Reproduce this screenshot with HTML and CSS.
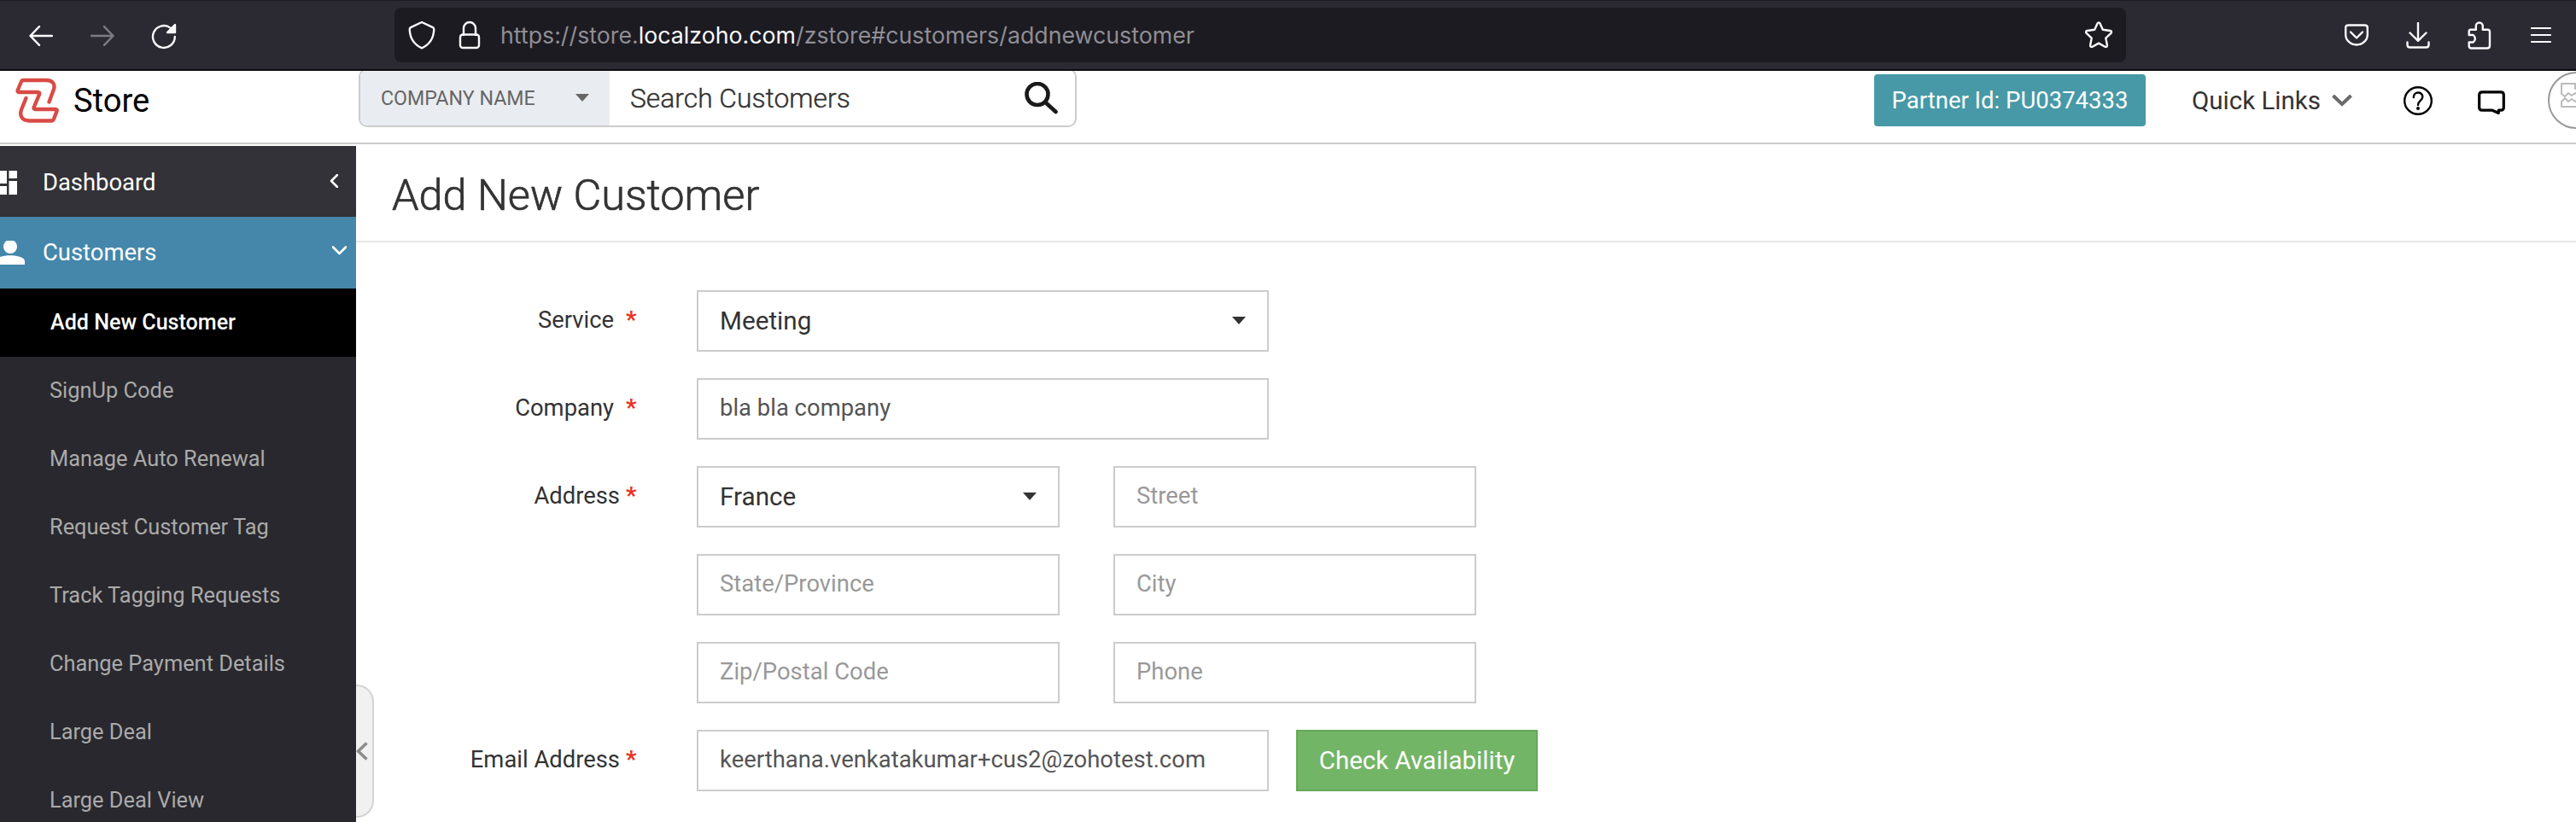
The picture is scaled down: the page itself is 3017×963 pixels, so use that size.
FILE: index.html
```
<!DOCTYPE html>
<html lang="en">
<head>
    <meta charset="UTF-8">
    <meta name="viewport" content="width=device-width, initial-scale=1.0">
    <title>Store - Add New Customer</title>
    <link rel="stylesheet" href="styles.css">
</head>
<body>
    <div class="browser-bar">
        <div class="nav-buttons">
            <svg width="28" height="24" viewBox="0 0 28 24"><path d="M12 1.2L1.5 12L12 22.8M1.5 12H27"/></svg>
            <svg class="disabled" width="28" height="24" viewBox="0 0 28 24"><path d="M16 1.2L26.5 12L16 22.8M26.5 12H1"/></svg>
            <svg class="reload" width="30" height="30" viewBox="0 0 30 30"><path d="M27.8 15A12.9 12.9 0 1 1 22.5 4.6L25 7"/><path class="solid" d="M28 1V10H19Z"/></svg>
        </div>
        <div class="url-bar">
            <svg class="shield" width="32" height="34" viewBox="0 0 32 34"><path d="M16 2L29 8.2C30.4 8.8 30.3 10 30.2 11.5C29.6 21 24.5 28.4 16 32.3C7.500 28.4 2.400 21 1.800 11.500C1.700 10 1.600 8.800 3 8.200Z"/></svg>
            <svg class="lock" width="26" height="34" viewBox="0 0 26 34"><path d="M6 17V9A7 7 0 0 1 20 9V17"/><rect x="2" y="16.500" width="22" height="15.500" rx="3"/></svg>
            <div class="url">https://store.<span>localzoho.com</span>/zstore#customers/addnewcustomer</div>
            <svg class="star" width="34" height="34" viewBox="0 0 34 34"><path d="M15.500 3.500C16.200 2 17.800 2 18.500 3.500L21.800 10.800L30.500 12C32 12.200 32.500 13.800 31.400 14.900L25.300 20.600L26.900 29C27.200 30.700 25.700 31.600 24.300 30.800L17 26.600L9.700 30.800C8.300 31.600 6.800 30.700 7.100 29L8.700 20.600L2.600 14.900C1.500 13.800 2 12.200 3.500 12L12.200 10.800Z"/></svg>
        </div>
        <div class="tools">
            <svg width="28" height="26" viewBox="0 0 28 26"><path d="M4.500 1.500H23.500Q26.800 1.500 26.800 4.500V12.500A12.800 12 0 0 1 1.200 12.500V4.500Q1.200 1.500 4.500 1.500Z"/><path d="M7 9.500L14 16.500L21 9.500"/></svg>
            <svg width="28" height="31" viewBox="0 0 28 31"><path d="M14 1V21.500M4.500 12.500L14 21.800L23.500 12.500M1.500 23.500V26.500Q1.500 29.500 4.500 29.500H23.500Q26.500 29.500 26.500 26.500V23.500"/></svg>
            <svg class="puzzle" width="28" height="33" viewBox="0 0 28 33"><path d="M3.500 9.800H9.800V5.500A4 4 0 0 1 17.800 5.500V9.800H23.500Q26 9.800 26 12.300V28.500Q26 31.500 23 31.500H4.500Q1.700 31.500 1.700 28.700V24.500H6.500A5 5 0 0 0 6.500 16H1.700V12Q1.700 9.800 3.500 9.800Z"/></svg>
            <svg class="burger" width="26" height="20" viewBox="0 0 26 20"><path d="M2 2H24M2 10H24M2 18H24"/></svg>
        </div>
    </div>

    <div class="header">
        <div class="logo">
            <svg width="52" height="53" viewBox="0 0 52 53"><path d="M39.500 28.500L45 13.500C47 7 43 3 36.500 3H9.500Q7.500 3 6.800 5L2.800 14.500Q1.900 17 4.500 17H26Q29 17 28 19.700L21.800 34.500Q20.800 37 23.500 37H47Q49.300 37 48.500 39.200L45 48.500Q44.200 50.500 42 50.500H16.500C8 50.500 4.500 45 7 37.500L12.500 24"/></svg>
            <span>Store</span>
        </div>
        <div class="search">
            <div class="search-type">COMPANY NAME <i class="arrow"></i></div>
            <div class="search-text">Search Customers</div>
            <svg width="40" height="38" viewBox="0 0 40 38"><circle cx="15" cy="14.500" r="12.500"/><path d="M24.500 24L36.500 35"/></svg>
        </div>
        <div class="header-right">
            <div class="partner">Partner Id: PU0374333</div>
            <div class="quick">Quick Links
                <svg width="24" height="15" viewBox="0 0 24 15"><path d="M1.500 2L12 12L22.500 2"/></svg>
            </div>
            <svg class="help" width="34" height="34" viewBox="0 0 34 34"><circle cx="17" cy="17" r="15.800"/><path d="M11.800 13C11.800 5.800 22.300 5.800 22.300 12.500C22.300 17 17 17 17 22"/><circle class="dot" cx="17" cy="26" r="2"/></svg>
            <svg class="chat" width="32" height="29" viewBox="0 0 32 29"><path d="M5 1.800H27Q30.300 1.800 30.300 5V20Q30.300 23.200 27 23.200H24.300V26.500L17 23.200H5Q1.700 23.200 1.700 20V5Q1.700 1.800 5 1.800Z"/></svg>
            <div class="avatar">
                <svg width="32" height="32" viewBox="0 0 32 32"><path d="M2 14V2H18V8H28M2 14L6 17L10 13L14 16L18 13L22 16L26 13M18 2L28 8M2 29H30M2 29V23L6 19L10 23L14 20L18 23L22 20L26 23"/></svg>
            </div>
        </div>
    </div>

    <div class="page">
        <div class="sidebar">
            <div class="menu dashboard">
                <svg class="menu-icon" width="20" height="28" viewBox="0 0 20 28"><path d="M0 0H8V15H0ZM0 18H8V28H0ZM10.500 0H20V9H10.500ZM10.500 12H20V28H10.500Z"/></svg>
                <span>Dashboard</span>
                <svg class="chev" width="10" height="16" viewBox="0 0 10 16"><path d="M9 1L2 8L9 15"/></svg>
            </div>
            <div class="menu active">
                <svg class="menu-icon" width="29" height="28" viewBox="0 0 29 28"><circle cx="12" cy="7" r="8"/><path d="M-5 28V24C-5 15 29 15 29 24V28Z"/></svg>
                <span>Customers</span>
                <svg class="chev down" width="17" height="11" viewBox="0 0 17 11"><path d="M1 1.500L8.500 9L16 1.500"/></svg>
            </div>
            <div class="sub current">Add New Customer</div>
            <div class="sub">SignUp Code</div>
            <div class="sub">Manage Auto Renewal</div>
            <div class="sub">Request Customer Tag</div>
            <div class="sub">Track Tagging Requests</div>
            <div class="sub">Change Payment Details</div>
            <div class="sub">Large Deal</div>
            <div class="sub">Large Deal View</div>
            <div class="collapse">
                <svg width="14" height="22" viewBox="0 0 14 22"><path d="M12.500 1.500L2.500 11L12.500 20.500"/></svg>
            </div>
        </div>

        <div class="content">
            <h1>Add New Customer</h1>
            <div class="form">
                <label class="wide">Service<b>*</b></label>
                <div class="fields">
                    <div class="select long">Meeting <i class="arrow"></i></div>
                </div>

                <label class="wide">Company<b>*</b></label>
                <div class="fields">
                    <input class="long" type="text" value="bla bla company">
                </div>

                <label>Address<b>*</b></label>
                <div class="fields">
                    <div class="select">France <i class="arrow"></i></div>
                    <input type="text" placeholder="Street">
                </div>

                <label></label>
                <div class="fields">
                    <input type="text" placeholder="State/Province">
                    <input type="text" placeholder="City">
                </div>

                <label></label>
                <div class="fields">
                    <input type="text" placeholder="Zip/Postal Code">
                    <input type="text" placeholder="Phone">
                </div>

                <label>Email Address<b>*</b></label>
                <div class="fields email">
                    <input class="long" type="text" value="keerthana.venkatakumar+cus2@zohotest.com">
                    <button>Check Availability</button>
                </div>
            </div>
        </div>
    </div>
</body>
</html>
```
FILE: styles.css
```
* {
    box-sizing: border-box;
}
body {
    margin: 0;
    height: 963px;
    overflow: hidden;
    background: #fff;
    color: #333;
    font-family: Roboto, sans-serif;
}
svg {
    display: block;
    flex: none;
    fill: none;
    stroke-linecap: round;
    stroke-linejoin: round;
}

/* browser toolbar */
.browser-bar {
    position: relative;
    z-index: 1;
    display: flex;
    height: 83px;
    padding-top: 8px;
    background: #2b2a33;
    border-top: 1px solid #1c1b22;
    border-bottom: 2px solid #0c0c0d;
}
.browser-bar svg {
    stroke: #fbfbfe;
    stroke-width: 2.4;
}
.nav-buttons {
    display: flex;
    align-items: center;
    gap: 44px;
    width: 462px;
    height: 66px;
    padding-left: 34px;
}
.nav-buttons .disabled {
    stroke: #7d7c83;
}
.nav-buttons .reload {
    margin-left: -1px;
    margin-top: 2px;
}
.reload .solid {
    fill: #fbfbfe;
}
.url-bar {
    display: flex;
    align-items: center;
    width: 2028px;
    height: 64px;
    padding: 0 15px 0 16px;
    background: #1c1b22;
    border-radius: 8px;
}
.lock {
    margin-left: 27px;
}
.url {
    margin-left: 23px;
    color: #8f8e94;
    font-family: Inter, sans-serif;
    font-size: 26.75px;
}
.url span {
    color: #fbfbfe;
}
.star {
    margin-left: auto;
}
.tools {
    display: flex;
    align-items: center;
    height: 64px;
    gap: 44px;
    margin-left: 256px;
}
.tools .burger {
    margin-left: 1px;
    stroke-width: 2.2;
}

/* store header */
.header {
    display: flex;
    align-items: center;
    height: 86px;
    padding-bottom: 15px;
    border-bottom: 2px solid #ccc;
}
.logo {
    display: flex;
    align-items: center;
    width: 420px;
    padding-left: 18px;
    color: #000;
    font-size: 38.1px;
}
.logo svg {
    margin-right: 16px;
    stroke: #d94b45;
    stroke-width: 4.4;
}
.search {
    display: flex;
    align-items: center;
    width: 841px;
    height: 69px;
    margin-top: -6px;
    border: 2px solid #ccc;
    border-radius: 10px;
    overflow: hidden;
}
.search-type {
    display: flex;
    align-items: center;
    justify-content: space-between;
    width: 292px;
    height: 100%;
    padding: 0 24px 0 24px;
    background: #e9edf1;
    color: #666;
    font-size: 23.2px;
}
.arrow {
    border: 8px solid transparent;
    border-top: 9px solid #333;
    border-bottom: 0;
}
.search-type .arrow {
    border-top-color: #666;
}
.search-text {
    flex: 1;
    padding-left: 24px;
    font-size: 31.8px;
    font-weight: 300;
    -webkit-text-stroke: 0.4px #333;
}
.search svg {
    margin-right: 19px;
    stroke: #1a1a1a;
    stroke-width: 4.6;
}
.header-right {
    display: flex;
    align-items: center;
    margin-left: 934px;
}
.partner {
    width: 318px;
    height: 61px;
    line-height: 61px;
    text-align: center;
    background: #4799a7;
    border-radius: 4px;
    color: #fff;
    font-size: 27.5px;
}
.quick {
    display: flex;
    align-items: center;
    gap: 13px;
    width: 300px;
    padding-left: 54px;
    font-size: 29.5px;
}
.quick svg {
    stroke: #6b6b6b;
    stroke-width: 4;
    stroke-linecap: butt;
    stroke-linejoin: miter;
}
.help, .chat {
    stroke: #000;
    stroke-width: 2.4;
}
.help {
    margin-left: 2px;
}
.help .dot {
    fill: #000;
    stroke: none;
}
.chat {
    margin: 5px 0 0 53px;
    stroke-width: 3.2;
}
.avatar {
    width: 67px;
    height: 67px;
    margin: 0 -34px 0 50px;
    padding: 10px 0 0 12px;
    border: 2px solid #999;
    border-radius: 50%;
}
.avatar svg {
    stroke: #bbb;
    stroke-width: 2;
}

.page {
    display: flex;
}
.sidebar {
    position: relative;
    width: 417px;
    height: 792px;
    margin-top: 2px;
    background: #29282e;
}
.menu {
    display: flex;
    align-items: center;
    height: 83px;
    padding-top: 2px;
    background: #333238;
    color: #fff;
    font-size: 27.4px;
}
.menu.active {
    height: 84px;
    padding-top: 0;
    background: #4587ab;
}
.menu-icon {
    fill: #fff;
}
.menu span {
    width: 335px;
    margin-left: 30px;
}
.menu.active span {
    margin-left: 21px;
}
.chev {
    margin: -3px 0 0 1px;
    stroke: #fff;
    stroke-width: 2.6;
}
.chev.down {
    margin: -5px 0 0 4px;
}
.sub {
    height: 80px;
    padding-left: 58px;
    line-height: 79px;
    color: #aaa;
    font-size: 25.4px;
}
.sub.current {
    padding-left: 59px;
    background: #000;
    color: #fff;
    font-size: 25.1px;
    font-weight: 500;
}
/* handle that folds the sidebar away */
.collapse {
    position: absolute;
    left: 417px;
    top: 631px;
    display: flex;
    align-items: center;
    width: 21px;
    height: 156px;
    background: #f1f1f1;
    border: 2px solid #d6d2d4;
    border-left: 0;
    border-radius: 0 20px 20px 0;
}
.collapse svg {
    stroke: #8c8c8c;
    stroke-width: 3.6;
    stroke-linecap: butt;
}

.content {
    flex: 1;
}
h1 {
    height: 115px;
    margin: 0;
    padding: 7px 0 0 42px;
    border-bottom: 2px solid #e8e6e8;
    line-height: 106px;
    font-size: 50.5px;
    font-weight: 300;
    -webkit-text-stroke: 0.7px #333;
}
.form {
    display: grid;
    grid-template-columns: 328px auto;
    column-gap: 71px;
    row-gap: 31px;
    padding-top: 56px;
}
label {
    display: flex;
    align-items: center;
    justify-content: flex-end;
    padding-bottom: 3px;
    font-size: 27.4px;
}
label b {
    width: 12px;
    margin-left: 7px;
    color: #e8321f;
    font-weight: 700;
}
.wide b {
    margin-left: 14px;
}
.fields {
    display: flex;
    gap: 63px;
}
.fields.email {
    gap: 32px;
}
input, .select {
    width: 425px;
    height: 72px;
    padding: 0 25px 2px;
    background: #fff;
    border: 2px solid #ccc;
    color: #555;
    font-family: inherit;
    font-size: 27.45px;
}
.select {
    display: flex;
    align-items: center;
    justify-content: space-between;
    color: #333;
    font-size: 29.7px;
}
.long {
    width: 670px;
}
input::placeholder {
    color: #999;
}
button {
    width: 283px;
    height: 72px;
    padding: 0 0 1px;
    background: #73b566;
    border: 2px solid #66a858;
    color: #fff;
    font-family: inherit;
    font-size: 29.5px;
}
```
